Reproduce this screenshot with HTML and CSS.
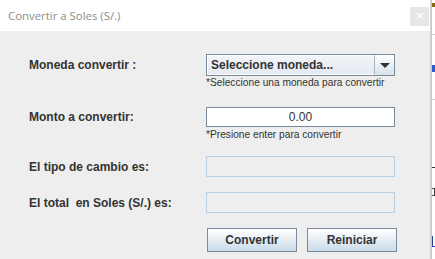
FILE: index.html
```html
<!DOCTYPE html>
<html>
<head>
<meta charset="utf-8">
<link rel="stylesheet" href="styles.css">
</head>
<body>
<div class="screen">
  <div class="window">
    <div class="titlebar">
      <span class="title">Convertir a Soles (S/.)</span>
      <span class="close">×</span>
    </div>
    <div class="content">
      <div class="row row-combo">
        <div class="label">Moneda convertir :</div>
        <div class="combo">
          <span class="combo-text">Seleccione moneda...</span>
          <span class="combo-btn"><span class="arrow"></span></span>
        </div>
      </div>
      <div class="hint hint-1">*Seleccione una moneda para convertir</div>
      <div class="row row-amount">
        <div class="label">Monto a convertir:</div>
        <div class="field field-amount">0.00</div>
      </div>
      <div class="hint hint-2">*Presione enter para convertir</div>
      <div class="row row-rate">
        <div class="label">El tipo de cambio es:</div>
        <div class="field field-disabled"></div>
      </div>
      <div class="row row-total">
        <div class="label">El total&nbsp; en Soles (S/.) es:</div>
        <div class="field field-disabled"></div>
      </div>
      <div class="buttons">
        <button class="btn">Convertir</button>
        <button class="btn">Reiniciar</button>
      </div>
    </div>
  </div>
  <div class="strip">
    <div class="strip-mark mark-a"></div>
    <div class="strip-line line-1"></div>
    <div class="strip-mark mark-b"></div>
    <div class="strip-line line-2"></div>
    <div class="strip-mark mark-c"></div>
    <div class="strip-mark mark-d"></div>
    <div class="strip-mark mark-e"></div>
  </div>
</div>
</body>
</html>
```

FILE: styles.css
```css
html, body {
  margin: 0;
  padding: 0;
  background: #ffffff;
}

.screen {
  display: flex;
  width: 435px;
  height: 259px;
  overflow: hidden;
}

.window {
  width: 430px;
  height: 259px;
  background: #eeeeee;
  border-right: 1px solid #d2d2d2;
  flex: none;
  font-family: "Liberation Sans", Arial, sans-serif;
}

.titlebar {
  height: 31px;
  background: #ffffff;
  display: flex;
  align-items: center;
  justify-content: space-between;
}

.title {
  padding-left: 8px;
  font-family: "Open Sans", "Noto Sans", sans-serif;
  font-size: 11.4px;
  color: #8c8c8c;
  margin-top: -1px;
}

.close {
  width: 19px;
  height: 19px;
  margin-right: 1px;
  margin-top: 2px;
  background: #e6e6e6;
  color: #ffffff;
  font-size: 12px;
  line-height: 18px;
  text-align: center;
  font-family: "DejaVu Sans", sans-serif;
}

.content {
  padding: 23px 0 0 29px;
}

.row {
  display: flex;
  align-items: center;
}

.label {
  width: 177px;
  font-size: 12px;
  font-weight: bold;
  color: #333333;
}

.combo {
  box-sizing: border-box;
  width: 189px;
  height: 22px;
  border: 1px solid #7a8a99;
  display: flex;
  background: linear-gradient(#f2f5f9, #e4eaf1);
}

.combo-text {
  flex: 1;
  box-sizing: border-box;
  border: 1px solid #ffffff;
  border-right: 1px solid #a6b3c1;
  padding-left: 3px;
  font-size: 12px;
  font-weight: bold;
  color: #333333;
  line-height: 18px;
}

.combo-btn {
  width: 19px;
  display: flex;
  align-items: center;
  justify-content: center;
  background: linear-gradient(#ffffff, #d6e2ee);
}

.arrow {
  width: 0;
  height: 0;
  border-left: 5px solid transparent;
  border-right: 5px solid transparent;
  border-top: 5px solid #333333;
}

.hint {
  margin-left: 177px;
  font-size: 10.2px;
  color: #333333;
  line-height: 12px;
}

.hint-1 {
  margin-top: 1px;
  margin-bottom: 18px;
}

.hint-2 {
  margin-top: 2px;
  margin-bottom: 15px;
}

.field {
  box-sizing: border-box;
  width: 189px;
}

.field-amount {
  height: 20px;
  border: 1px solid #7a8a99;
  background: #ffffff;
  text-align: center;
  font-size: 12px;
  line-height: 18px;
  color: #333333;
}

.field-disabled {
  height: 21px;
  border: 1px solid #b8cfe5;
  background: #eeeeee;
}

.row-total {
  margin-top: 15px;
}

.buttons {
  display: flex;
  gap: 10px;
  margin: 15px 0 0 178px;
}

.btn {
  box-sizing: border-box;
  width: 90px;
  height: 24px;
  border: 1px solid #7a8a9a;
  border-radius: 0;
  padding: 0;
  background: linear-gradient(#ffffff 0%, #eef3f8 35%, #c9dbea 100%);
  font-family: "Liberation Sans", Arial, sans-serif;
  font-size: 12px;
  font-weight: bold;
  color: #333333;
}

.strip {
  position: relative;
  flex: 1;
  background: #ffffff;
  border-left: 1px solid #c8c8c8;
}

.strip-line {
  position: absolute;
  left: 0;
  right: 0;
  height: 1px;
  background: #cfcfcf;
}

.line-1 { top: 34px; }
.line-2 { top: 99px; }

.strip-mark {
  position: absolute;
  left: 0;
  width: 3px;
}

.mark-a { top: 3px; height: 4px; background: #8a6a10; }
.mark-b { top: 65px; height: 7px; background: #2c5ccc; }
.mark-c { top: 167px; height: 1px; background: #333333; }
.mark-d { top: 188px; height: 8px; border: 1px solid #444444; border-left: none; box-sizing: border-box; }
.mark-e { top: 236px; height: 11px; border-left: 1px solid #2244aa; border-bottom: 1px solid #2244aa; box-sizing: border-box; }
```
